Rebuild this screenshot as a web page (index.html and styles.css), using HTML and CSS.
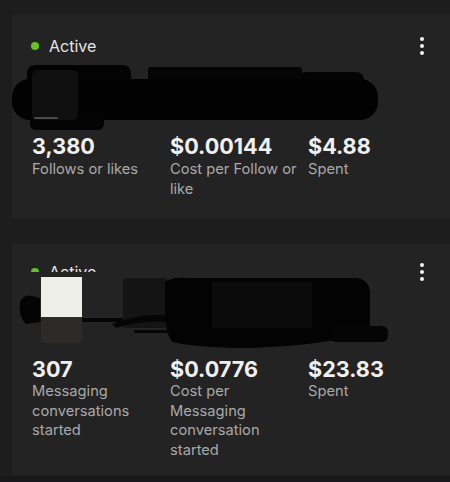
FILE: index.html
```html
<!DOCTYPE html>
<html>
<head>
<meta charset="utf-8">
<link rel="stylesheet" href="styles.css">
</head>
<body>
<div class="page">
  <section class="card card--a">
    <div class="status">
      <span class="dot"></span><span class="status-text">Active</span>
      <span class="kebab"><i></i><i></i><i></i></span>
    </div>
    <svg class="redact redact--a" width="380" height="66" viewBox="0 0 380 66">
      <rect x="15" y="1" width="104" height="22" rx="8" fill="#030303"/>
      <rect x="136" y="3" width="154" height="20" rx="3" fill="#050505"/>
      <rect x="286" y="8" width="66" height="22" rx="8" fill="#040404"/>
      <rect x="0" y="15" width="366" height="41" rx="18" fill="#020202"/>
      <rect x="18" y="44" width="74" height="22" rx="6" fill="#030303"/>
      <rect x="20" y="6" width="46" height="50" rx="5" fill="#0f0f0f"/>
      <rect x="22" y="53" width="24" height="2" rx="1" fill="#4a4a4a"/>
    </svg>
    <div class="metrics">
      <div class="metric"><div class="value">3,380</div><div class="label">Follows or likes</div></div>
      <div class="metric"><div class="value">$0.00144</div><div class="label">Cost per Follow or like</div></div>
      <div class="metric"><div class="value">$4.88</div><div class="label">Spent</div></div>
    </div>
  </section>

  <section class="card card--b">
    <div class="status">
      <span class="dot"></span><span class="status-text">Active</span>
      <span class="kebab"><i></i><i></i><i></i></span>
    </div>
    <svg class="redact redact--b" width="380" height="78" viewBox="0 0 380 78">
      <rect x="17" y="0" width="90" height="7" fill="#232323"/>
      <path d="M8 30 Q12 22 20 24 L28 26 L28 50 L14 52 Q6 44 8 30 Z" fill="#040404"/>
      <rect x="28" y="46" width="92" height="4" rx="2" fill="#050505"/>
      <rect x="111" y="6" width="44" height="50" rx="3" fill="#141414"/>
      <path d="M100 52 Q130 40 160 44 L160 50 Q130 48 104 56 Z" fill="#050505"/>
      <path d="M153 10 Q160 5 175 6 L345 6 Q358 8 358 22 L358 62 Q300 74 240 76 Q190 76 160 70 Q153 60 153 40 Z" fill="#030303"/>
      <rect x="200" y="10" width="100" height="46" fill="#0b0b0b"/>
      <rect x="318" y="54" width="58" height="16" rx="6" fill="#050505"/>
      <rect x="122" y="58" width="38" height="3" rx="1.5" fill="#050505"/>
      <path d="M29 45 L70 45 L70 66 Q70 71 64 71 L35 71 Q29 71 29 66 Z" fill="#2e2a2a"/>
      <rect x="29" y="5" width="41" height="40" fill="#efefea"/>
    </svg>
    <div class="metrics">
      <div class="metric"><div class="value">307</div><div class="label">Messaging conversations started</div></div>
      <div class="metric"><div class="value">$0.0776</div><div class="label">Cost per Messaging conversation started</div></div>
      <div class="metric"><div class="value">$23.83</div><div class="label">Spent</div></div>
    </div>
  </section>
</div>
</body>
</html>
```

FILE: styles.css
```css
html {
  background: #19191c;
}
body {
  margin: 0;
  font-family: Inter, "Liberation Sans", Arial, sans-serif;
}
.page {
  background: #1d1d1d;
  padding: 15px 0 1px 12px;
  display: flex;
  flex-direction: column;
  gap: 26px;
}
.card {
  background: #232323;
  display: flex;
  flex-direction: column;
}
.card--a {
  padding: 21px 0 19px 0;
}
.card--b {
  padding: 18px 0 15px 0;
}
.status {
  display: flex;
  align-items: center;
  height: 20px;
  padding: 0 26px 0 19px;
}
.dot {
  width: 8px;
  height: 8px;
  border-radius: 50%;
  background: #62c41f;
}
.status-text {
  margin-left: 10px;
  font-size: 16px;
  line-height: 20px;
  color: #e4e4e4;
  flex: 1;
}
.kebab {
  display: flex;
  flex-direction: column;
  gap: 2.5px;
}
.kebab i {
  display: block;
  width: 4.5px;
  height: 4.5px;
  border-radius: 50%;
  background: #f2f2f2;
}
.redact {
  display: block;
  position: relative;
}
.redact--a {
  margin-top: 8px;
}
.redact--b {
  margin-top: -10px;
}
.metrics {
  display: grid;
  grid-template-columns: 130px 130px 130px;
  column-gap: 8px;
  padding-left: 20px;
  margin-top: 2px;
}
.card--b .metrics {
  margin-top: 5px;
}
.value {
  font-size: 21.6px;
  line-height: 28px;
  font-weight: 700;
  color: #f0f0f0;
}
.label {
  margin-top: -1px;
  font-size: 14.7px;
  line-height: 20px;
  color: #a9a9a9;
}
.card--b .label {
  line-height: 19.5px;
}
```
